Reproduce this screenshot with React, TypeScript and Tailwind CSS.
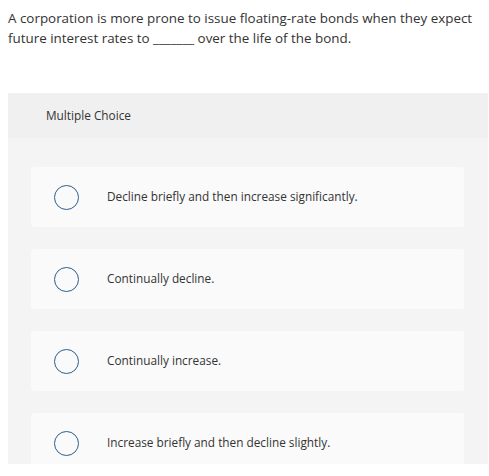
import React from "react";

const options = [
  "Decline briefly and then increase significantly.",
  "Continually decline.",
  "Continually increase.",
  "Increase briefly and then decline slightly.",
];

export default function App() {
  return (
    <div className="w-[489px] h-[476px] bg-white overflow-hidden" style={{ fontFamily: "'Open Sans', 'Liberation Sans', sans-serif" }}>
      <p className="pt-[8px] pl-[8px] pr-[4px] text-[13.4px] leading-[20px] text-[#333333]">
        A corporation is more prone to issue floating-rate bonds when they expect future interest rates to _______ over the life of the bond.
      </p>
      <div className="mt-[45px] ml-[8px] w-[480px] h-[371px] overflow-hidden bg-[#f4f4f4]">
        <div className="h-[45px] bg-[#f0f0f0] flex items-center pl-[38px] text-[11.8px] text-[#333333]">
          Multiple Choice
        </div>
        <div className="pt-[29px] pl-[23px] pr-[24px] flex flex-col gap-[22px]">
          {options.map((o) => (
            <div key={o} className="h-[60px] shrink-0 bg-[#fafafa] rounded-[3px] flex items-center pl-[23px]">
              <div className="w-[25px] h-[25px] rounded-full border-[1.5px] border-[#2b5f8e] shrink-0"></div>
              <div className="ml-[28px] text-[11.8px] text-[#333333]">{o}</div>
            </div>
          ))}
        </div>
      </div>
    </div>
  );
}
